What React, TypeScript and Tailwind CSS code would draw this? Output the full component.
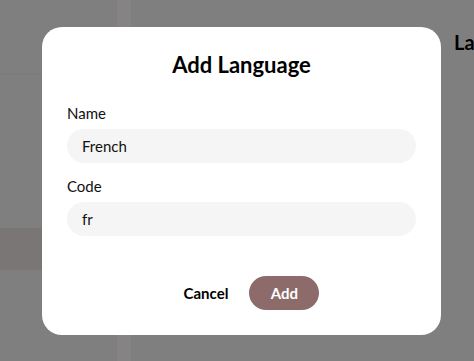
import React from "react";

export default function App() {
  return (
    <div
      className="relative h-[361px] w-[474px] overflow-hidden bg-[#7f7f7f]"
      style={{ fontFamily: "Lato, 'Noto Sans', sans-serif" }}
    >
      {/* dimmed page behind */}
      <div className="flex h-full w-full">
        <div className="flex w-[117px] flex-col">
          <div className="h-[75px] border-b border-[#7a7a7a]" />
          <div className="h-[153px]" />
          <div className="h-[42px] w-[42px] bg-[#7a7676]" />
        </div>
        <div className="w-[14px] bg-[#858383]" />
        <div className="flex min-w-0 flex-1 overflow-hidden pl-[323px] pt-[27px]">
          <span className="whitespace-nowrap text-[20px] font-bold text-black">La</span>
        </div>
      </div>

      {/* overlay with dialog */}
      <div className="absolute inset-0 pl-[42px] pt-[27px]">
        <div className="flex h-[308px] w-[399px] flex-col rounded-[20px] bg-white px-[25px]">
          <h2 className="mt-[25px] text-center text-[22px] font-bold leading-[26px] text-black">
            Add Language
          </h2>
          <label className="mt-[26px] text-[15px] leading-[18px] text-[#111]">Name</label>
          <div className="mt-[7px] flex h-[34px] items-center rounded-full bg-[#f5f5f5] px-[15px] text-[15px] text-[#111]">
            French
          </div>
          <label className="mt-[14px] text-[15px] leading-[18px] text-[#111]">Code</label>
          <div className="mt-[7px] flex h-[34px] items-center rounded-full bg-[#f5f5f5] px-[15px] text-[15px] text-[#111]">
            fr
          </div>
          <div className="mt-[40px] flex items-center justify-center gap-[21px] pl-[20px]">
            <button className="text-[15px] font-bold text-black">Cancel</button>
            <button className="h-[34px] w-[70px] rounded-full bg-[#8d6b6b] text-[15px] font-bold text-white">
              Add
            </button>
          </div>
        </div>
      </div>
    </div>
  );
}
